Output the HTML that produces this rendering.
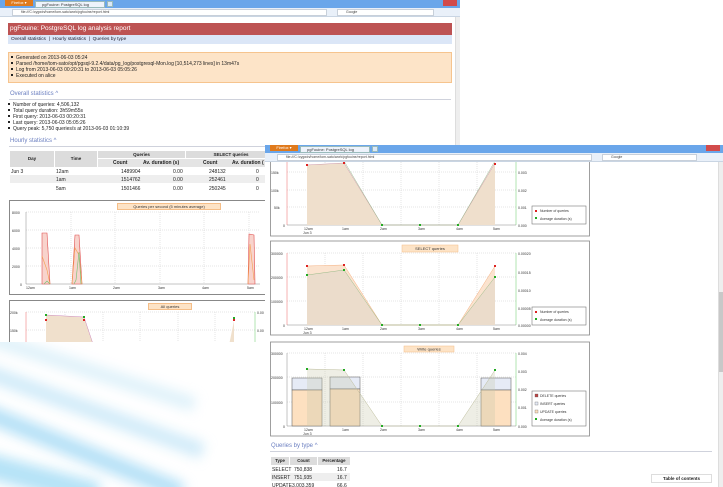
<!DOCTYPE html>
<html><head><meta charset="utf-8"><style>
*{margin:0;padding:0;box-sizing:border-box}
html,body{width:723px;height:487px;overflow:hidden}
body{background:#fff;font-family:"Liberation Sans","DejaVu Sans",sans-serif;position:relative;color:#222}
.a{position:absolute}
.t{position:absolute;white-space:nowrap;font-size:5px;line-height:6px}
.win{position:absolute;background:#fff;overflow:hidden}
.tb{position:absolute;left:0;right:0;top:0;height:8px;background:#6aa6ea}
.ff{position:absolute;left:5px;top:0;width:28px;height:6px;background:#e07a1c;color:#fff;font-size:4px;line-height:6px;text-align:center}
.tab{position:absolute;left:35px;top:1px;width:70px;height:7px;background:#eef3fb;border:1px solid #9bb;font-size:4px;line-height:5px;padding-left:6px;color:#333}
.plus{position:absolute;left:107px;top:1px;width:6px;height:6px;background:#dbe8f7;border:1px solid #9bb}
.cl{position:absolute;right:3px;top:0;width:14px;height:6px;background:#d24b4b}
.ad{position:absolute;left:0;right:0;top:8px;height:9px;background:#e9f0f9;border-bottom:1px solid #c9d5e3}
.url{position:absolute;left:12px;top:1px;height:7px;background:#fff;border:1px solid #c8d0da;font-size:3.5px;line-height:5px;padding-left:8px;color:#444}
.sb{position:absolute;top:17px;right:0;width:5px;bottom:0;background:#eee;border-left:1px solid #ddd}
.box{position:absolute;border:1px solid #888;background:#fff}
.ttl{position:absolute;background:#fde3c6;border:1px solid #f5be88;font-size:4px;line-height:5px;text-align:center;color:#333}
.h2{position:absolute;font-size:6px;color:#6b7fc0;white-space:nowrap}
.hr{position:absolute;height:1px;background:#cfd2dc}
ul.l{position:absolute;list-style:none;font-size:5px;line-height:6px;color:#222}
ul.l li:before{content:"";display:inline-block;width:2px;height:2px;background:#222;margin:0 3px 1px 1px;vertical-align:middle}
</style></head><body>

<!-- desktop swirl -->
<div class="a" style="left:0;top:342px;width:265px;height:145px;overflow:hidden">
 <div class="a" style="left:-30px;top:20px;width:230px;height:14px;background:rgba(160,215,240,.35);filter:blur(6px);transform:rotate(18deg)"></div>
 <div class="a" style="left:-30px;top:60px;width:240px;height:16px;background:rgba(140,205,240,.4);filter:blur(6px);transform:rotate(20deg)"></div>
 <div class="a" style="left:-30px;top:100px;width:220px;height:18px;background:rgba(110,195,240,.5);filter:blur(6px);transform:rotate(22deg)"></div>
 <div class="a" style="left:-20px;top:125px;width:120px;height:25px;background:rgba(110,200,240,.5);filter:blur(6px);transform:rotate(15deg)"></div>
</div>

<!-- WINDOW 1 -->
<div class="win" style="left:0;top:0;width:460px;height:342px">
 <div class="tb"></div><div class="ff">Firefox ▾</div>
 <div class="tab">pgFouine: PostgreSQL log analysis ...</div><div class="plus"></div>
 <div class="cl"></div>
 <div class="ad"><div class="url" style="width:315px">file:///C:/cygwin/home/tom-sato/work/pgfouine/report.html</div>
  <div class="url" style="left:337px;width:97px">Google</div></div>
 <div class="a" style="left:8px;top:23px;width:444px;height:12px;background:#bd5353;color:#fff;font-size:6.5px;line-height:12px;padding-left:2px">pgFouine: PostgreSQL log analysis report</div>
 <div class="a" style="left:8px;top:35px;width:444px;height:9px;background:#dbe6f7;font-size:4.8px;line-height:9px;padding-left:3px;color:#223">Overall statistics &nbsp;| &nbsp;Hourly statistics &nbsp;| &nbsp;Queries by type</div>
 <div class="a" style="left:8px;top:52px;width:444px;height:31px;background:#fde4c8;border:1px solid #f6c48e"></div>
 <ul class="l" style="left:10px;top:55px"><li>Generated on 2013-06-03 05:24</li><li>Parsed /home/tom-sato/opt/pgsql-9.2.4/data/pg_log/postgresql-Mon.log [10,514,273 lines] in 13m47s</li><li>Log from 2013-06-03 00:20:31 to 2013-06-03 05:05:26</li><li>Executed on alice</li></ul>
 <div class="h2" style="left:10px;top:91px">Overall statistics ^</div><div class="hr" style="left:9px;top:99px;width:442px"></div>
 <ul class="l" style="left:7px;top:102px"><li>Number of queries: 4,506,132</li><li>Total query duration: 3h59m55s</li><li>First query: 2013-06-03 00:20:31</li><li>Last query: 2013-06-03 05:05:26</li><li>Query peak: 5,750 queries/s at 2013-06-03 01:10:39</li></ul>
 <div class="h2" style="left:10px;top:138px">Hourly statistics ^</div><div class="hr" style="left:9px;top:146px;width:442px"></div>
 <div class="a" style="left:10px;top:151px;width:44px;height:16px;background:#dcdcdc;font-size:4.5px;font-weight:bold;line-height:16px;text-align:center">Day</div>
 <div class="a" style="left:55px;top:151px;width:42px;height:16px;background:#dcdcdc;font-size:4.5px;font-weight:bold;line-height:16px;text-align:center">Time</div>
 <div class="a" style="left:98px;top:151px;width:87px;height:7px;background:#dcdcdc;font-size:4.5px;font-weight:bold;line-height:7px;text-align:center">Queries</div>
 <div class="a" style="left:186px;top:151px;width:90px;height:7px;background:#dcdcdc;font-size:4.5px;font-weight:bold;line-height:7px;text-align:center">SELECT queries</div>
 <div class="a" style="left:98px;top:159px;width:178px;height:8px;background:#e4e4e4;font-size:4.3px;font-weight:bold;line-height:8px"><span class="t" style="left:15px;top:1px">Count</span><span class="t" style="left:45px;top:1px">Av. duration (s)</span><span class="t" style="left:105px;top:1px">Count</span><span class="t" style="left:134px;top:1px">Av. duration (</span></div>
 <div class="a" style="left:10px;top:175px;width:266px;height:8px;background:#eeeeee"></div>
 <span class="t" style="left:11px;top:169px">Jun 3</span><span class="t" style="left:56px;top:169px">12am</span><span class="t" style="left:121px;top:169px">1489904</span><span class="t" style="left:173px;top:169px">0.00</span><span class="t" style="left:209px;top:169px">248132</span><span class="t" style="left:256px;top:169px">0</span>
 <span class="t" style="left:56px;top:177px">1am</span><span class="t" style="left:121px;top:177px">1514762</span><span class="t" style="left:173px;top:177px">0.00</span><span class="t" style="left:209px;top:177px">252461</span><span class="t" style="left:256px;top:177px">0</span>
 <span class="t" style="left:56px;top:186px">5am</span><span class="t" style="left:121px;top:186px">1501466</span><span class="t" style="left:173px;top:186px">0.00</span><span class="t" style="left:209px;top:186px">250245</span><span class="t" style="left:256px;top:186px">0</span>
 <div class="box" style="left:9px;top:200px;width:300px;height:95px"></div>
 <div class="ttl" style="left:117px;top:203px;width:104px;height:7px">Queries per second (5 minutes average)</div>
 <svg class="a" style="left:0;top:200px" width="300" height="95">
  <g stroke="#ccc" stroke-dasharray="1,1" stroke-width=".5"><line x1="26" y1="12" x2="260" y2="12"/><line x1="26" y1="30" x2="260" y2="30"/><line x1="26" y1="48" x2="260" y2="48"/><line x1="26" y1="66" x2="260" y2="66"/><line x1="71" y1="12" x2="71" y2="84"/><line x1="115" y1="12" x2="115" y2="84"/><line x1="160" y1="12" x2="160" y2="84"/><line x1="204" y1="12" x2="204" y2="84"/><line x1="249" y1="12" x2="249" y2="84"/></g>
  <line x1="26" y1="12" x2="26" y2="84" stroke="#888" stroke-width=".5"/><line x1="26" y1="84" x2="260" y2="84" stroke="#888" stroke-width=".5"/>
  <polygon points="42,84 42,33 47,33 50,84" fill="#f8d3cc" stroke="#e05050" stroke-width=".6"/>
  <polygon points="72,84 75,35 79,35 82,84" fill="#f8d3cc" stroke="#e05050" stroke-width=".6"/>
  <polygon points="248,84 249,34 254,35 255,84" fill="#f8d3cc" stroke="#e05050" stroke-width=".6"/>
  <polyline points="42,56 47,70 50,84" fill="none" stroke="#f5a050" stroke-width=".6"/>
  <polyline points="72,84 75,48 79,55 82,84" fill="none" stroke="#f5a050" stroke-width=".6"/>
  <polyline points="74,84 76,80 79,52 81,84" fill="none" stroke="#70c070" stroke-width=".6"/>
  <polyline points="44,84 47,81 50,84" fill="none" stroke="#70c070" stroke-width=".6"/>
  <polyline points="248,84 250,44 254,80" fill="none" stroke="#f5a050" stroke-width=".6"/>
  <g font-size="3.5" fill="#333"><text x="12" y="14">8000</text><text x="12" y="32">6000</text><text x="12" y="50">4000</text><text x="12" y="68">2000</text><text x="20" y="86">0</text><text x="26" y="89">12am</text><text x="69" y="89">1am</text><text x="113" y="89">2am</text><text x="158" y="89">3am</text><text x="202" y="89">4am</text><text x="247" y="89">5am</text></g>
 </svg>
 <div class="box" style="left:9px;top:300px;width:300px;height:60px"></div>
 <div class="ttl" style="left:148px;top:303px;width:44px;height:7px">All queries</div>
 <svg class="a" style="left:0;top:300px" width="300" height="50">
  <g stroke="#ccc" stroke-dasharray="1,1" stroke-width=".5"><line x1="26" y1="12" x2="255" y2="12"/><line x1="26" y1="30" x2="255" y2="30"/><line x1="65" y1="12" x2="65" y2="50"/><line x1="103" y1="12" x2="103" y2="50"/><line x1="140" y1="12" x2="140" y2="50"/><line x1="178" y1="12" x2="178" y2="50"/><line x1="215" y1="12" x2="215" y2="50"/></g>
  <line x1="26" y1="12" x2="26" y2="50" stroke="#e66" stroke-width=".5"/><line x1="255" y1="12" x2="255" y2="50" stroke="#6c6" stroke-width=".5"/>
  <polygon points="46,50 46,15 84,17 95,50" fill="#f0e0cc"/><polygon points="228,50 234,21 234,50" fill="#f0e0cc"/>
  <polyline points="46,15 84,17 95,50" fill="none" stroke="#c8b" stroke-width=".5"/>
  <rect x="45" y="14" width="2" height="2" fill="#2a2"/><rect x="83" y="16" width="2" height="2" fill="#2a2"/><rect x="45" y="19" width="2" height="2" fill="#d22"/><rect x="83" y="19" width="2" height="2" fill="#d22"/><rect x="233" y="19" width="2" height="2" fill="#d22"/><rect x="233" y="17" width="2" height="2" fill="#2a2"/>
  <g font-size="3.5" fill="#333"><text x="10" y="14">200k</text><text x="10" y="32">150k</text><text x="257" y="14">0.00</text><text x="257" y="32">0.00</text></g>
 </svg>
 <div class="sb"></div>
</div>

<!-- WINDOW 2 -->
<div class="win" style="left:265px;top:145px;width:458px;height:342px">
 <div class="tb"></div><div class="ff">Firefox ▾</div>
 <div class="tab">pgFouine: PostgreSQL log analysis ...</div><div class="plus"></div>
 <div class="cl"></div>
 <div class="ad"><div class="url" style="width:315px">file:///C:/cygwin/home/tom-sato/work/pgfouine/report.html</div>
  <div class="url" style="left:337px;width:95px">Google</div></div>
 <div class="sb" style="top:17px"><div class="a" style="left:0;top:130px;width:4px;height:80px;background:#c8c8c8"></div></div>
</div>
<svg class="a" style="left:265px;top:162px" width="452" height="280">
 <rect x="5.5" y="-5" width="319" height="79" fill="#fff" stroke="#888" stroke-width=".8"/>
 <g stroke="#ccc" stroke-dasharray="1,1" stroke-width=".5"><line x1="22" y1="10" x2="251" y2="10"/><line x1="22" y1="28" x2="251" y2="28"/><line x1="22" y1="45" x2="251" y2="45"/><line x1="60" y1="0" x2="60" y2="63"/><line x1="98" y1="0" x2="98" y2="63"/><line x1="136" y1="0" x2="136" y2="63"/><line x1="174" y1="0" x2="174" y2="63"/><line x1="212" y1="0" x2="212" y2="63"/></g>
 <line x1="22" y1="0" x2="22" y2="63" stroke="#e66" stroke-width=".5"/><line x1="251" y1="0" x2="251" y2="63" stroke="#6c6" stroke-width=".5"/><line x1="22" y1="63" x2="251" y2="63" stroke="#888" stroke-width=".5"/>
 <polygon points="42,63 42,3 79,1 117,63 193,63 230,1 230,63" fill="#efdfcc"/>
 <polyline points="42,3 79,1 117,63 193,63 230,1" fill="none" stroke="#c9a" stroke-width=".5"/>
 <polyline points="42,-3 79,-1 117,63 193,63 230,-1" fill="none" stroke="#9b8" stroke-width=".5"/>
 <g fill="#d22"><rect x="41" y="2" width="2" height="2"/><rect x="78" y="0" width="2" height="2"/><rect x="229" y="1" width="2" height="2"/></g>
 <g fill="#2a2"><rect x="116" y="62" width="2" height="2"/><rect x="154" y="62" width="2" height="2"/><rect x="192" y="62" width="2" height="2"/><rect x="229" y="-2" width="2" height="2"/></g>
 <g font-size="3.5" fill="#333"><text x="6" y="12">150k</text><text x="6" y="30">100k</text><text x="9" y="47">50k</text><text x="18" y="65">0</text><text x="253" y="12">0.003</text><text x="253" y="30">0.002</text><text x="253" y="47">0.001</text><text x="253" y="65">0.000</text>
 <text x="39" y="68">12am</text><text x="38" y="72">Jun 3</text><text x="77" y="68">1am</text><text x="115" y="68">2am</text><text x="153" y="68">3am</text><text x="191" y="68">4am</text><text x="228" y="68">5am</text></g>
 <rect x="267" y="44" width="54" height="18" fill="#fff" stroke="#777" stroke-width=".6"/>
 <g font-size="3.5" fill="#333"><rect x="270" y="48" width="2" height="2" fill="#d22"/><text x="275" y="50">Number of queries</text><rect x="270" y="55" width="2" height="2" fill="#2a2"/><text x="275" y="58">Average duration (s)</text></g>

 <g transform="translate(0,79)">
 <rect x="5.5" y="0" width="319" height="94" fill="#fff" stroke="#888" stroke-width=".8"/>
 <rect x="137" y="4" width="56" height="7" fill="#fde3c6" stroke="#f5be88" stroke-width=".5"/><text x="165" y="9" font-size="4" text-anchor="middle" fill="#333">SELECT queries</text>
 <g stroke="#ccc" stroke-dasharray="1,1" stroke-width=".5"><line x1="22" y1="12" x2="251" y2="12"/><line x1="22" y1="36" x2="251" y2="36"/><line x1="22" y1="60" x2="251" y2="60"/><line x1="60" y1="12" x2="60" y2="84"/><line x1="98" y1="12" x2="98" y2="84"/><line x1="136" y1="12" x2="136" y2="84"/><line x1="174" y1="12" x2="174" y2="84"/><line x1="212" y1="12" x2="212" y2="84"/></g>
 <line x1="22" y1="12" x2="22" y2="84" stroke="#e66" stroke-width=".5"/><line x1="251" y1="12" x2="251" y2="84" stroke="#6c6" stroke-width=".5"/><line x1="22" y1="84" x2="251" y2="84" stroke="#888" stroke-width=".5"/>
 <polygon points="42,84 42,25 79,24 117,84 193,84 230,25 230,84" fill="#fbe3cf"/>
 <polygon points="42,84 42,34 79,29 117,84 193,84 230,36 230,84" fill="#ebdccb"/>
 <polyline points="42,25 79,24 117,84 193,84 230,25" fill="none" stroke="#f5b080" stroke-width=".5"/>
 <polyline points="42,34 79,29 117,84 193,84 230,36" fill="none" stroke="#9b8" stroke-width=".5"/>
 <g fill="#d22"><rect x="41" y="24" width="2" height="2"/><rect x="78" y="23" width="2" height="2"/><rect x="229" y="24" width="2" height="2"/></g>
 <g fill="#2a2"><rect x="41" y="33" width="2" height="2"/><rect x="78" y="28" width="2" height="2"/><rect x="116" y="83" width="2" height="2"/><rect x="154" y="83" width="2" height="2"/><rect x="192" y="83" width="2" height="2"/><rect x="229" y="35" width="2" height="2"/></g>
 <g font-size="3.5" fill="#333"><text x="6" y="14">300000</text><text x="6" y="38">200000</text><text x="6" y="62">100000</text><text x="18" y="86">0</text><text x="253" y="14">0.00020</text><text x="253" y="33">0.00015</text><text x="253" y="51">0.00010</text><text x="253" y="69">0.00005</text><text x="253" y="86">0.00000</text>
 <text x="39" y="89">12am</text><text x="38" y="93">Jun 3</text><text x="77" y="89">1am</text><text x="115" y="89">2am</text><text x="153" y="89">3am</text><text x="191" y="89">4am</text><text x="228" y="89">5am</text></g>
 <rect x="267" y="66" width="54" height="18" fill="#fff" stroke="#777" stroke-width=".6"/>
 <g font-size="3.5" fill="#333"><rect x="270" y="70" width="2" height="2" fill="#d22"/><text x="275" y="72">Number of queries</text><rect x="270" y="77" width="2" height="2" fill="#2a2"/><text x="275" y="80">Average duration (s)</text></g>
 </g>

 <g transform="translate(0,180)">
 <rect x="5.5" y="0" width="319" height="94" fill="#fff" stroke="#888" stroke-width=".8"/>
 <rect x="139" y="4" width="50" height="6" fill="#fde3c6" stroke="#f5be88" stroke-width=".5"/><text x="164" y="8.5" font-size="4" text-anchor="middle" fill="#333">Write queries</text>
 <g stroke="#ccc" stroke-dasharray="1,1" stroke-width=".5"><line x1="22" y1="11" x2="251" y2="11"/><line x1="22" y1="35" x2="251" y2="35"/><line x1="22" y1="60" x2="251" y2="60"/><line x1="60" y1="11" x2="60" y2="84"/><line x1="98" y1="11" x2="98" y2="84"/><line x1="136" y1="11" x2="136" y2="84"/><line x1="174" y1="11" x2="174" y2="84"/><line x1="212" y1="11" x2="212" y2="84"/></g>
 <line x1="22" y1="11" x2="22" y2="84" stroke="#888" stroke-width=".5"/><line x1="251" y1="11" x2="251" y2="84" stroke="#6c6" stroke-width=".5"/><line x1="22" y1="84" x2="251" y2="84" stroke="#888" stroke-width=".5"/>
 <g stroke="#555" stroke-width=".5"><rect x="27" y="36" width="30" height="12" fill="#e6ebf6"/><rect x="27" y="48" width="30" height="36" fill="#fde0c0"/><rect x="65" y="35" width="30" height="12" fill="#e6ebf6"/><rect x="65" y="47" width="30" height="37" fill="#fde0c0"/><rect x="216" y="36" width="30" height="12" fill="#e6ebf6"/><rect x="216" y="48" width="30" height="36" fill="#fde0c0"/></g>
 <polygon points="42,84 42,27 79,28 117,84 193,84 230,28 230,84" fill="rgba(200,200,170,.3)"/>
 <polyline points="42,27 79,28 117,84 193,84 230,28" fill="none" stroke="#bb9" stroke-width=".5"/>
 <g fill="#2a2"><rect x="41" y="26" width="2" height="2"/><rect x="78" y="27" width="2" height="2"/><rect x="116" y="83" width="2" height="2"/><rect x="154" y="83" width="2" height="2"/><rect x="192" y="83" width="2" height="2"/><rect x="229" y="27" width="2" height="2"/></g>
 <g font-size="3.5" fill="#333"><text x="6" y="13">300000</text><text x="6" y="37">200000</text><text x="6" y="62">100000</text><text x="18" y="86">0</text><text x="253" y="13">0.004</text><text x="253" y="31">0.003</text><text x="253" y="49">0.002</text><text x="253" y="67">0.001</text><text x="253" y="86">0.000</text>
 <text x="39" y="89">12am</text><text x="38" y="93">Jun 3</text><text x="77" y="89">1am</text><text x="115" y="89">2am</text><text x="153" y="89">3am</text><text x="191" y="89">4am</text><text x="228" y="89">5am</text></g>
 <rect x="267" y="49" width="54" height="35" fill="#fff" stroke="#777" stroke-width=".6"/>
 <g font-size="3.5" fill="#333"><rect x="270" y="52" width="3" height="3" fill="#b44" stroke="#555" stroke-width=".3"/><text x="275" y="55">DELETE queries</text><rect x="270" y="60" width="3" height="3" fill="#e6ebf6" stroke="#555" stroke-width=".3"/><text x="275" y="63">INSERT queries</text><rect x="270" y="68" width="3" height="3" fill="#fde0c0" stroke="#555" stroke-width=".3"/><text x="275" y="71">UPDATE queries</text><rect x="270" y="76" width="2" height="2" fill="#2a2"/><text x="275" y="79">Average duration (s)</text></g>
 </g>
</svg>
<div class="h2" style="left:271px;top:443px">Queries by type ^</div><div class="hr" style="left:270px;top:451px;width:442px"></div>
<div class="a" style="left:271px;top:457px;width:18px;height:8px;background:#dcdcdc;font-size:4.3px;font-weight:bold;line-height:8px;text-align:center">Type</div>
<div class="a" style="left:290px;top:457px;width:27px;height:8px;background:#dcdcdc;font-size:4.3px;font-weight:bold;line-height:8px;text-align:center">Count</div>
<div class="a" style="left:318px;top:457px;width:32px;height:8px;background:#dcdcdc;font-size:4.3px;font-weight:bold;line-height:8px;text-align:center">Percentage</div>
<div class="a" style="left:271px;top:473px;width:79px;height:8px;background:#eee"></div>
<span class="t" style="left:272px;top:467px">SELECT</span><span class="t" style="left:294px;top:467px">750,838</span><span class="t" style="left:337px;top:467px">16.7</span>
<span class="t" style="left:272px;top:475px">INSERT</span><span class="t" style="left:294px;top:475px">751,935</span><span class="t" style="left:337px;top:475px">16.7</span>
<span class="t" style="left:272px;top:483px">UPDATE</span><span class="t" style="left:292px;top:483px">3,003,359</span><span class="t" style="left:337px;top:483px">66.6</span>
<div class="a" style="left:651px;top:474px;width:61px;height:9px;background:#fff;border:1px solid #ddd;font-size:4.5px;font-weight:bold;line-height:8px;text-align:center">Table of contents</div>
</body></html>
